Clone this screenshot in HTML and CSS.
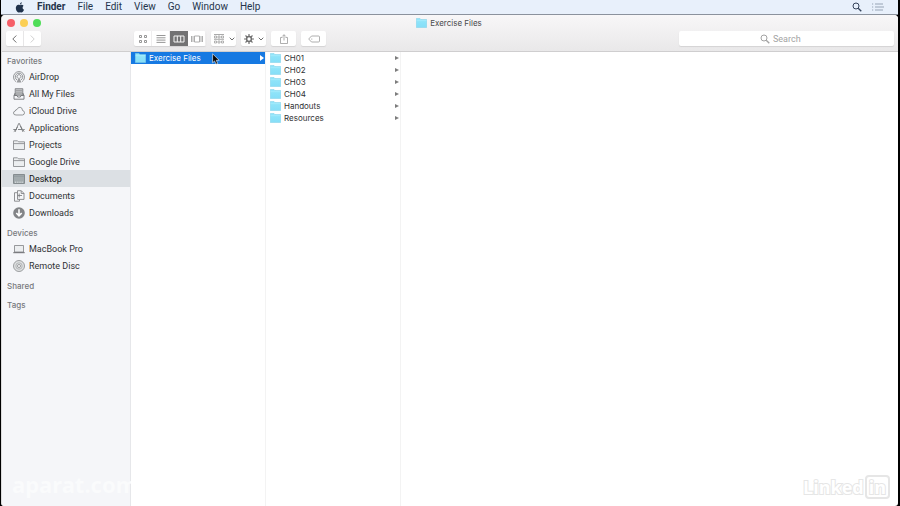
FILE: index.html
```html
<!DOCTYPE html>
<html lang="en">
<head>
<meta charset="utf-8">
<title>Exercise Files</title>
<link rel="stylesheet" href="styles.css">
</head>
<body>
<svg class="defs" aria-hidden="true">
  <defs>
    <linearGradient id="blue" x1="0" y1="0" x2="0" y2="1"><stop offset="0" stop-color="#92e6fb"/><stop offset="1" stop-color="#86def7"/></linearGradient>
    <symbol id="folder" viewBox="0 0 11 10"><path d="M.3.500H4l1 1h5.700v8H.3z" fill="url(#blue)" stroke="#7fcfe6" stroke-width=".5"/><path d="M.5 2.700h10" stroke="#b4effd" stroke-width=".6"/></symbol>
    <symbol id="folder-line" viewBox="0 0 12 12"><path d="M.5 10.500V1.800h4l1 1h6v7.700zM.5 4.600h11" fill="#eceef0" stroke="#808285" stroke-width=".8"/></symbol>
    <symbol id="search" viewBox="0 0 10 10"><circle cx="4" cy="4" r="3" fill="none" stroke="currentColor"/><path d="M6.200 6.200 9.300 9.300" stroke="currentColor" stroke-width="1.300"/></symbol>
    <symbol id="chevron" viewBox="0 0 6 4"><path d="m.7.7 2.300 2.300L5.300.7" fill="none" stroke="#6d6d6d"/></symbol>
  </defs>
</svg>
<div class="screen">
  <header class="menubar">
    <svg class="apple" viewBox="0 0 10 12"><path d="M7 .3C5.700.5 4.900 1.500 5 2.700 6.200 2.600 7 1.600 7 .3zM8.900 4C7.800 2.700 6.200 3 5.100 3.500 4 3 2.300 2.700 1.200 4-.3 5.900.6 9.400 2.300 11c.9.900 1.700.2 2.800.1 1.100.1 1.800.8 2.700-.1.700-.7 1.300-1.600 1.600-2.500C7.500 7.500 7.300 5.200 8.900 4z" fill="#20324c"/></svg>
    <nav class="menus">
      <a class="app" href="#">Finder</a><a href="#">File</a><a href="#">Edit</a><a href="#">View</a><a href="#">Go</a><a href="#">Window</a><a href="#">Help</a>
    </nav>
    <button class="status" aria-label="Spotlight"><svg class="i10"><use href="#search"/></svg></button>
    <button class="status notes" aria-label="Notifications"><svg class="i12" viewBox="0 0 12 10"><path d="M3 2h8M3 5h9M3 8h8M0 2h1.200M0 5h1.200M0 8h1.200" stroke="#8f9bad" stroke-width=".9"/></svg></button>
  </header>
  <main class="window">
    <header class="toolbar">
      <div class="title-row">
        <div class="lights"><button class="red" aria-label="Close"></button><button class="yellow" aria-label="Minimize"></button><button class="green" aria-label="Zoom"></button></div>
        <h1><svg class="folder"><use href="#folder"/></svg>Exercise Files</h1>
        <div class="balance"></div>
      </div>
      <div class="tools">
        <div class="group nav">
          <button aria-label="Back"><svg class="arrow" viewBox="0 0 5 8"><path d="M4.300.5.8 4l3.500 3.500" fill="none" stroke="#6f6f6f"/></svg></button>
          <button aria-label="Forward"><svg class="arrow" viewBox="0 0 5 8"><path d="M.7.500 4.200 4 .7 7.500" fill="none" stroke="#d0d0d0"/></svg></button>
        </div>
        <div class="group views">
          <button aria-label="Icon view"><svg class="i12" viewBox="0 0 12 10"><path d="M2.500 1.500h2v2h-2zM7.500 1.500h2v2h-2zM2.500 6.500h2v2h-2zM7.500 6.500h2v2h-2z" fill="none" stroke="#8b8b8b" stroke-width=".9"/></svg></button>
          <button aria-label="List view"><svg class="i12" viewBox="0 0 12 10"><path d="M1.500 1.500h9M1.500 3.800h9M1.500 6.100h9M1.500 8.400h9" stroke="#8b8b8b" stroke-width=".9"/></svg></button>
          <button class="on" aria-label="Column view"><svg class="i12" viewBox="0 0 12 10"><path d="M1 2h10v6H1zM4.300 2v6M7.700 2v6" fill="none" stroke="#f4f4f4"/></svg></button>
          <button aria-label="Cover flow"><svg class="i12" viewBox="0 0 12 10"><path d="M3.500 2h5v6h-5zM.500 2v6M2 2v6M10 2v6M11.500 2v6" fill="none" stroke="#999" stroke-width=".8"/></svg></button>
        </div>
        <button class="tool" aria-label="Arrange"><svg class="i12" viewBox="0 0 12 10"><path d="M1 .5h10M1 5.300h10" stroke="#858585" stroke-width=".7"/><path d="M1.500 2h2v2h-2zM5 2h2v2H5zM8.500 2h2v2h-2zM1.500 7h2v2h-2zM5 7h2v2H5zM8.500 7h2v2h-2z" fill="none" stroke="#959595" stroke-width=".7"/></svg><svg class="chev"><use href="#chevron"/></svg></button>
        <button class="tool" aria-label="Action"><svg class="i10" viewBox="0 0 10 10"><circle cx="5" cy="5" r="2.400" fill="none" stroke="#6e6e6e" stroke-width="1.500"/><path d="M5 0v2M5 8v2M0 5h2M8 5h2M1.500 1.500l1.400 1.400M7.100 7.100l1.400 1.400M8.500 1.500 7.100 2.900M2.900 7.100 1.500 8.500" stroke="#6e6e6e" stroke-width="1.200"/></svg><svg class="chev"><use href="#chevron"/></svg></button>
        <button class="tool" aria-label="Share"><svg class="i10" viewBox="0 0 10 10"><path d="M3.500 3.500h-2v6h7v-6h-2M5 6.500V.8M3.200 2.500 5 .7l1.800 1.800" fill="none" stroke="#9b9b9b" stroke-width=".8"/></svg></button>
        <button class="tool" aria-label="Tags"><svg class="i12" viewBox="0 0 12 10"><path d="M3.500 2h7q1 0 1 1v4q0 1-1 1h-7L.7 5z" fill="none" stroke="#9b9b9b" stroke-width=".8"/><circle cx="3.800" cy="5" r=".6" fill="#999"/></svg></button>
        <label class="search"><svg class="i10"><use href="#search"/></svg><input type="text" placeholder="Search" aria-label="Search"></label>
      </div>
    </header>
    <div class="content">
      <aside class="sidebar">
        <h2>Favorites</h2>
        <ul>
          <li><a href="#"><svg class="side" viewBox="0 0 12 12"><g fill="none" stroke="#7b7d80" stroke-width=".8"><path d="M3 10.700a5.500 5.500 0 1 1 6 0M4 9a3.700 3.700 0 1 1 4 0M5 7.400a2 2 0 1 1 2 0"/></g><path d="m6 6 2.500 5.500h-5z" fill="#9a9c9f"/></svg>AirDrop</a></li>
          <li><a href="#"><svg class="side" viewBox="0 0 12 12"><path d="M2.200.7h7.600v6.500H2.200z" fill="#c5c7c9" stroke="#737578" stroke-width=".8"/><path d="M3 2.500h6M3 4.200h6M3 5.800h6" stroke="#898b8e" stroke-width=".6"/><path d="M2.200 5 1 7.500v3.700h10V7.500L9.800 5M1 7.500h3l.7 1.500h2.600L8 7.500h3" fill="none" stroke="#737578" stroke-width=".9"/></svg>All My Files</a></li>
          <li><a href="#"><svg class="side" viewBox="0 0 12 12"><path d="M3 10Q.5 10 .5 8q0-1.700 1.800-2Q2.500 4.500 4 4.500 5 2 7.200 2.300 9.500 2.700 9.500 5.500q2 .3 2 2.300T9.500 10z" fill="none" stroke="#7b7d80" stroke-width=".8"/></svg>iCloud Drive</a></li>
          <li><a href="#"><svg class="side" viewBox="0 0 12 12"><path d="m2 10 3.700-8.500h.7L10 10M.3 7.500h3.500M5 7.500h4M10.200 7.500h1.500M.8 9.500Q3 8 4.500 5M7.500 4Q9 7.500 11.300 9.500" fill="none" stroke="#77797c" stroke-width=".9"/></svg>Applications</a></li>
          <li><a href="#"><svg class="side"><use href="#folder-line"/></svg>Projects</a></li>
          <li><a href="#"><svg class="side"><use href="#folder-line"/></svg>Google Drive</a></li>
          <li><a class="current" href="#"><svg class="side" viewBox="0 0 12 12"><path d="M.5 1.500h11v9H.5z" fill="#a3abae" stroke="#767e82" stroke-width=".8"/><path d="M1 3.200h10" stroke="#849095" stroke-width=".6"/><path d="M2 9.200h8" stroke="#e4e8ea" stroke-dasharray="1 .8"/></svg>Desktop</a></li>
          <li><a href="#"><svg class="side" viewBox="0 0 12 12"><path d="M4 2.700H1.500v8.500h5V9.500M4.500.7h3.800L11 3.400v6H4.500zM8.200.8v2.700H11M6.200 3.500v4M4.600 5.500H9" fill="none" stroke="#77797c" stroke-width=".8"/></svg>Documents</a></li>
          <li><a href="#"><svg class="side" viewBox="0 0 12 12"><circle cx="6" cy="6" r="5.800" fill="#828487"/><path d="M6 2.300v6M3.300 6 6 8.800 8.700 6" fill="none" stroke="#fff" stroke-width="1.600"/></svg>Downloads</a></li>
        </ul>
        <h2>Devices</h2>
        <ul>
          <li><a href="#"><svg class="side" viewBox="0 0 12 12"><path d="M1.500 2.500h9v6.500h-9z" fill="#eceef0" stroke="#808285" stroke-width=".8"/><path d="M.3 9.700h11.400" stroke="#696b6e"/></svg>MacBook Pro</a></li>
          <li><a href="#"><svg class="side" viewBox="0 0 12 12"><g fill="none" stroke="#898b8e" stroke-width=".8"><circle cx="6" cy="6" r="5.500" fill="#dfe1e2"/><circle cx="6" cy="6" r="3.200" stroke="#aaacae"/><circle cx="6" cy="6" r="1.500" fill="#fff"/></g></svg>Remote Disc</a></li>
        </ul>
        <h2>Shared</h2>
        <h2>Tags</h2>
        <p class="watermark">aparat.com</p>
      </aside>
      <section class="column" aria-label="Desktop">
        <ul class="files">
          <li><a class="selected" href="#"><svg class="folder"><use href="#folder"/></svg>Exercise Files<i class="more"></i></a></li>
        </ul>
        <svg class="cursor" viewBox="0 0 8 12"><path d="M.6.8v9l2-1.900 1.400 3.300 1.700-.7-1.400-3.200h2.900z" fill="#080808" stroke="#fff" stroke-width=".6"/></svg>
      </section>
      <section class="column" aria-label="Exercise Files">
        <ul class="files">
          <li><a href="#"><svg class="folder"><use href="#folder"/></svg>CH01<i class="more"></i></a></li>
          <li><a href="#"><svg class="folder"><use href="#folder"/></svg>CH02<i class="more"></i></a></li>
          <li><a href="#"><svg class="folder"><use href="#folder"/></svg>CH03<i class="more"></i></a></li>
          <li><a href="#"><svg class="folder"><use href="#folder"/></svg>CH04<i class="more"></i></a></li>
          <li><a href="#"><svg class="folder"><use href="#folder"/></svg>Handouts<i class="more"></i></a></li>
          <li><a href="#"><svg class="folder"><use href="#folder"/></svg>Resources<i class="more"></i></a></li>
        </ul>
      </section>
      <section class="preview"><p class="brand">Linked<span>in</span></p></section>
    </div>
  </main>
</div>
</body>
</html>
```
FILE: styles.css
```css
* { box-sizing: border-box; }
body { margin: 0; background: #000; color: #303234; font: 8px/12px Inter, "Liberation Sans", sans-serif; }
h1, h2, p, ul { margin: 0; padding: 0; }
ul { list-style: none; }
a { color: inherit; text-decoration: none; }
button { border: 0; padding: 0; background: none; font: inherit; }
svg { display: block; flex: none; }
.defs { position: absolute; width: 0; height: 0; }
.screen { min-height: 100vh; display: flex; flex-direction: column; padding: 0 2px 0 1px; }

.menubar { display: flex; align-items: center; height: 15px; padding: 0 14px; background: #e8f0fb; border-bottom: 1px solid #8b929d; color: #25344b; font: 10px/14px Roboto, sans-serif; }
.apple { width: 10px; height: 11px; }
.menus { display: flex; flex: 1; gap: 12px; padding-left: 12px; }
.app { font-weight: 700; }
.status { color: #35435a; }
.notes { margin-left: 10px; }
.i10 { width: 10px; height: 10px; }
.i12 { width: 12px; height: 10px; }

.window { flex: 1; display: flex; flex-direction: column; background: #fff; border-left: 1px solid #ddd; border-radius: 4px 4px 3px 3px; overflow: hidden; }
.toolbar { background: linear-gradient(#f8f7f8, #e9e8e9); border-bottom: 1px solid #cfcecf; }
.title-row { display: flex; align-items: center; height: 15px; padding: 0 7px 0 5px; }
.lights { display: flex; flex: 1; gap: 5px; }
.lights button { width: 8px; height: 8px; border-radius: 50%; }
.red { background: #f65f67; }
.yellow { background: #fbcf55; }
.green { background: #4fdd58; }
.balance { flex: 1; }
h1 { display: flex; align-items: center; gap: 3px; font-size: 8px; font-weight: 400; color: #48484a; }
.folder { width: 11px; height: 10px; }
.tools { display: flex; align-items: center; height: 21px; padding: 0 4px 4px 4px; }
.tools button { display: flex; align-items: center; justify-content: center; height: 15px; background: #fff; }
.group { display: flex; gap: 1px; border-radius: 2px; overflow: hidden; box-shadow: 0 1px 1px #d4d3d4; background: #e7e6e7; }
.nav button { width: 17px; }
.arrow { width: 5px; height: 8px; }
.views { margin-left: 93px; gap: 0; }
.views button { width: 18px; border-right: 1px solid #eeedee; }
.views .on { background: #727273; border-color: #727273; }
.tool { gap: 4px; width: 25px; margin-left: 5px; border-radius: 2px; box-shadow: 0 1px 1px #d4d3d4; }
.chev { width: 6px; height: 4px; }
.search { display: flex; flex: 0 1 215px; align-items: center; justify-content: center; gap: 3px; height: 15px; margin-left: auto; border-radius: 2px; background: #fff; box-shadow: 0 1px 1px #d4d3d4; color: #a3a3a3; }
.search input { width: 40px; border: 0; padding: 0; background: none; font: 9px/12px Roboto, sans-serif; outline: 0; }
.search input::placeholder { color: #a3a3a3; opacity: 1; }

.content { flex: 1; display: flex; }
.sidebar { display: flex; flex-direction: column; width: 129px; padding-top: 3px; background: #f5f6f9; border-right: 1px solid #e6e7ea; font: 9px/12px Roboto, sans-serif; }
h2 { margin-top: 6px; padding-left: 5px; color: #77797d; font: 500 8px/13px Inter, sans-serif; }
h2:first-child { margin-top: 0; }
.sidebar a { display: flex; align-items: center; gap: 4px; height: 17px; padding-left: 11px; }
.side { width: 12px; height: 12px; }
.sidebar .current { background: #dce0e4; color: #111; }
.watermark { margin-top: auto; padding: 0 0 8px 10px; white-space: nowrap; color: #fafbfc; font: 700 22px/28px "Noto Sans", sans-serif; }
.column { position: relative; width: 135px; background: #fff; border-right: 1px solid #f3f3f3; }
.files a { display: flex; align-items: center; gap: 3px; height: 12px; padding: 0 1px 0 4px; }
.files .selected { background: #1679e2; color: #fff; }
.more { margin-left: auto; border: solid transparent; border-width: 2px 0 2px 4px; border-left-color: #7d7d7d; }
.selected .more { border-left-color: #fff; border-width: 3px 0 3px 4px; }
.cursor { position: absolute; left: 81px; top: 1px; width: 8px; height: 12px; }
.preview { flex: 1; display: flex; align-items: flex-end; justify-content: flex-end; padding: 0 8px 7px; }
.brand { display: flex; align-items: center; gap: 1px; color: #fff; font: 700 18px/20px "Open Sans", sans-serif; -webkit-text-stroke: 2px #e6e6e6; paint-order: stroke fill; }
.brand span { padding: 0 2px; border: 2px solid #e6e6e6; border-radius: 4px; }
```
